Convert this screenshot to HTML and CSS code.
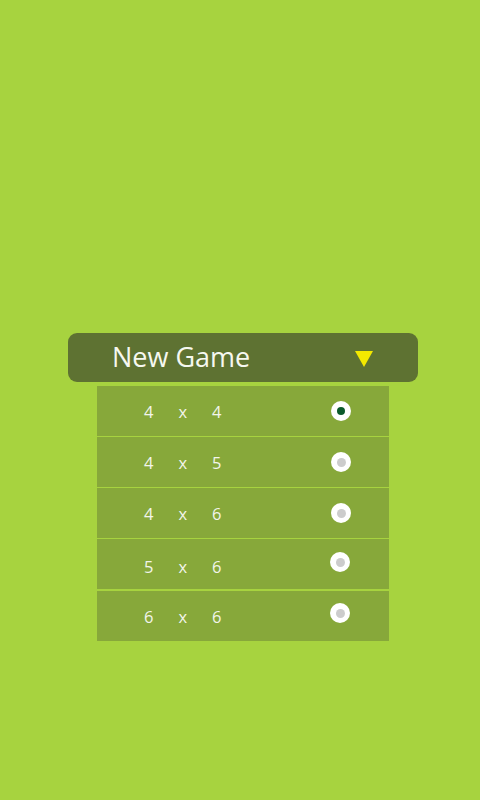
FILE: index.html
```html
<!DOCTYPE html>
<html>
<head>
<meta charset="utf-8">
<link rel="stylesheet" href="styles.css">
</head>
<body>
<div class="screen">
  <div class="menu">
    <div class="header">
      <span class="title">New Game</span>
      <span class="arrow"></span>
    </div>
    <div class="list">
      <div class="row">
        <span class="size"><span>4</span><span>x</span><span>4</span></span>
        <span class="radio selected"></span>
      </div>
      <div class="row">
        <span class="size"><span>4</span><span>x</span><span>5</span></span>
        <span class="radio"></span>
      </div>
      <div class="row">
        <span class="size"><span>4</span><span>x</span><span>6</span></span>
        <span class="radio"></span>
      </div>
      <div class="row row-low">
        <span class="size"><span>5</span><span>x</span><span>6</span></span>
        <span class="radio"></span>
      </div>
      <div class="row row-last">
        <span class="size"><span>6</span><span>x</span><span>6</span></span>
        <span class="radio"></span>
      </div>
    </div>
  </div>
</div>
</body>
</html>
```

FILE: styles.css
```css
html, body {
  margin: 0;
  padding: 0;
  background: #a7d33f;
  font-family: "Open Sans", "DejaVu Sans", sans-serif;
}

.screen {
  width: 480px;
  height: 800px;
  padding-top: 333px;
  box-sizing: border-box;
}

.menu {
  display: flex;
  flex-direction: column;
}

.header {
  margin-left: 68px;
  width: 350px;
  height: 49px;
  background: #5e7232;
  border-radius: 9px;
  display: flex;
  align-items: center;
  padding-left: 44px;
  padding-right: 45px;
  box-sizing: border-box;
}

.title {
  color: #f6f8f0;
  font-size: 27px;
  line-height: 49px;
  margin-top: -2px;
}

.arrow {
  margin-left: auto;
  width: 0;
  height: 0;
  border-left: 9px solid transparent;
  border-right: 9px solid transparent;
  border-top: 16px solid #f3e900;
  margin-top: 2px;
}

.list {
  margin-left: 97px;
  margin-top: 4px;
  width: 292px;
  display: flex;
  flex-direction: column;
  gap: 1px;
}

.row {
  height: 50px;
  background: #87a83a;
  display: flex;
  align-items: center;
  padding-left: 47px;
  padding-right: 38px;
  box-sizing: border-box;
}

.row-last {
  margin-top: 1px;
}

.size {
  display: flex;
  gap: 25px;
  color: #f2f5ea;
  font-size: 16.5px;
  line-height: 20px;
  margin-top: 2px;
}

.row-low .size {
  margin-top: 6px;
}

.radio {
  margin-left: auto;
  width: 20px;
  height: 20px;
  border-radius: 50%;
  background: #ffffff;
  display: flex;
  align-items: center;
  justify-content: center;
}

.radio::after {
  content: "";
  width: 9px;
  height: 9px;
  border-radius: 50%;
  background: #cccccc;
}

.radio.selected::after {
  width: 8px;
  height: 8px;
  background: #0b5a2c;
}

.row-low .radio {
  margin-top: -4px;
  margin-right: 1px;
}

.row-last .radio {
  margin-top: -6px;
  margin-right: 1px;
}
```
